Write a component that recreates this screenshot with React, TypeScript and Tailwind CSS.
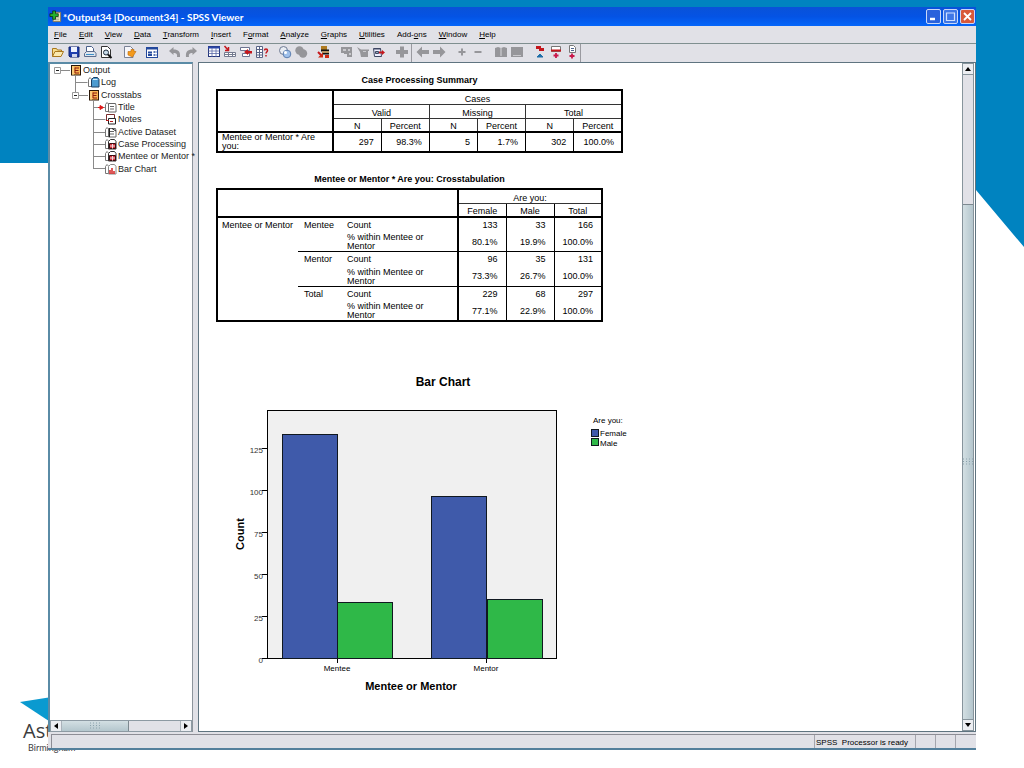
import { Fragment, type ReactNode } from "react";

const MENUS: [string, string, string][] = [
  ["", "F", "ile"],
  ["", "E", "dit"],
  ["", "V", "iew"],
  ["", "D", "ata"],
  ["", "T", "ransform"],
  ["", "I", "nsert"],
  ["F", "o", "rmat"],
  ["", "A", "nalyze"],
  ["", "G", "raphs"],
  ["", "U", "tilities"],
  ["Add-", "o", "ns"],
  ["", "W", "indow"],
  ["", "H", "elp"],
];

const GRAY = "#96969a";

const ICONS: Record<string, ReactNode> = {
  Open: (
    <>
      <path d="M2.5 12.500V4.500h4l1 1.500h4v2" fill="#f6dc8a" stroke="#a9771d" />
      <path d="M2.500 12.500l2.500-5h8.500l-2.500 5z" fill="#fbe9ae" stroke="#a9771d" />
    </>
  ),
  Save: (
    <>
      <path d="M3 3h10v10H4l-1-1z" fill="#1f3fae" stroke="#10226e" />
      <rect x="5" y="3" width="6" height="5" fill="#eef2ff" />
      <rect x="6" y="10" width="5" height="3" fill="#cfd6ee" />
    </>
  ),
  Print: (
    <>
      <path d="M4.500 8.500v-6h5l2 2v4" fill="#fff" stroke="#4a5f8a" />
      <path d="M2.500 12.500v-3l2-2h8l1.500 2v3z" fill="#dfe5ee" stroke="#5c6c8e" />
      <path d="M4 10.500h8" stroke="#3c8fc8" />
    </>
  ),
  "Print Preview": (
    <>
      <path d="M3.500 2.500h6l3 3v8h-9z" fill="#fff" stroke="#333" />
      <circle cx="8" cy="8.500" r="2.500" fill="#c9dbe9" stroke="#1f2f3f" />
      <path d="M10 10.500l3.500 3.500" stroke="#111" strokeWidth="2" />
    </>
  ),
  Export: (
    <>
      <path d="M3.500 2.500h6l2.500 2.500v8.500h-8.500z" fill="#f6f6fa" stroke="#7b8296" />
      <path d="M7 7.500h3v-2h3v2h2L11.500 13 7 11z" fill="#f39a1d" stroke="#c06a08" strokeWidth=".6" />
    </>
  ),
  "Recall Dialog": (
    <>
      <rect x="2.500" y="3.500" width="11" height="10" fill="#fff" stroke="#24499c" />
      <path d="M2 4.500h12" stroke="#24499c" strokeWidth="2" />
      <path d="M4 8.500h4M4 11h4" stroke="#24499c" strokeWidth="2" />
      <path d="M9.500 8h3M9.500 11h3" stroke="#24499c" strokeWidth="1.500" strokeDasharray="1.500 .5" />
    </>
  ),
  Undo: <path d="M2 7l4.500-4v2.500c5 0 7 2 6.500 7.500h-3c.5-3-.5-4-3.500-4V11z" fill={GRAY} />,
  Redo: <path d="M14 7l-4.500-4v2.500C4.500 5.500 2.500 7.500 3 13h3c-.5-3 .5-4 3.500-4V11z" fill={GRAY} />,
  "Go to Data": (
    <>
      <rect x="2.500" y="2.500" width="11" height="10" fill="#fff" stroke="#24357a" />
      <path d="M2 3.500h12" stroke="#2c47a8" strokeWidth="2" />
      <path d="M2.500 7h11M2.500 9.500h11M6 4v9M10 4v9" stroke="#5b6ba8" strokeWidth=".8" />
    </>
  ),
  "Go to Case": (
    <>
      <path d="M2.500 2l3.500 4M6.500 3v3.500H3" stroke="#c4161c" strokeWidth="1.500" fill="none" />
      <path d="M2.500 8.500h11v4h-11zM2.500 10.500h11M6.500 8.500v4M10.500 8.500v4" fill="#fff" stroke="#757b90" />
    </>
  ),
  "Go to Variable": (
    <>
      <path d="M2.500 3.500h9v3h-9zM4.500 9.500h7v3h-7z" fill="#fff" stroke="#6d7390" />
      <path d="M14 7H10V5L6 8l4 3V9.500h4z" fill="#c4161c" />
    </>
  ),
  Variables: (
    <>
      <path d="M2.500 2.500h6v11h-6zM2.500 5.500h6M2.500 8.500h6M2.500 11h6M5.500 2.500v11" fill="#fff" stroke="#596487" />
      <path d="M10.500 6.500c0-2 3-2 3 0 0 1.500-1.500 1.500-1.500 3M12 11v1.500" stroke="#c4161c" strokeWidth="1.500" fill="none" />
    </>
  ),
  "Use Sets": (
    <>
      <circle cx="6.500" cy="6.500" r="4" fill="#e9edf3" stroke="#6f7a92" />
      <circle cx="10" cy="10" r="3.800" fill="#9fc0ea" stroke="#5d7fb0" />
      <circle cx="8.500" cy="8.500" r="1.500" fill="#fff" />
    </>
  ),
  "Show All": (
    <>
      <circle cx="6.500" cy="6.500" r="4.200" fill={GRAY} />
      <circle cx="10" cy="9.500" r="4.200" fill={GRAY} />
    </>
  ),
  "Select Last Output": (
    <>
      <rect x="5" y="2" width="6" height="4" fill="#b07c22" />
      <path d="M5 6.500h8M6 9.500h7" stroke="#111" strokeWidth="2" />
      <path d="M6 8h7" stroke="#f3b04a" />
      <path d="M2 8l4 4" stroke="#c4161c" strokeWidth="2" />
      <path d="M2 13.500h5V8.500zM9 11h4v3H9z" fill="#d02a12" />
    </>
  ),
  "Associate Script": (
    <>
      <path d="M2 3h11v10H8v-3H5V9H2z" fill={GRAY} />
      <path d="M4 5h3v2H4zM9 5h2v2H9zM10 9h2v2h-2z" fill="#c9c9cd" />
    </>
  ),
  "Run Script": (
    <>
      <path d="M2 3l4 2.500h8v1.500h-1v6H6L5 8z" fill={GRAY} />
      <path d="M8 7h3v1H8z" fill="#c9c9cd" />
    </>
  ),
  "Designate Window": (
    <>
      <path d="M2.500 4.500h7l1 8h-7z" fill="#eef" stroke="#3e4762" />
      <path d="M3 5h7M4.500 7.500h3v2h-3z" stroke="#3e4762" fill="#9ab" />
      <path d="M8 7.500h3V6l3 2.500-3 2.500V9.500H8z" fill="#c4161c" />
    </>
  ),
  "Add Cross": <path d="M6 2.500h4V6h4v4h-4v3.500H6V10H2V6h4z" fill={GRAY} />,
  Back: <path d="M1.500 8L7 2.500V6h7v4H7v3.500z" fill={GRAY} />,
  Forward: <path d="M14.500 8L9 2.500V6H2v4h7v3.500z" fill={GRAY} />,
  Promote: <path d="M7 4.500h2V7h2.500v2H9v2.500H7V9H4.500V7H7z" fill={GRAY} />,
  Demote: <path d="M4.500 7h7v2h-7z" fill={GRAY} />,
  Expand: (
    <>
      <path d="M2 4l3-1 3 1 3-1 3 1v9H2z" fill={GRAY} />
      <path d="M8 4v8" stroke="#d8d8dc" />
    </>
  ),
  Collapse: (
    <>
      <path d="M2 3h12v10H2z" fill={GRAY} />
      <path d="M4 11.500h8" stroke="#c9c9cd" />
    </>
  ),
  "Insert Heading": (
    <>
      <path d="M4 2h5v2h3v3H7V5H4z" fill="#c4161c" />
      <path d="M5 13l3-3 3 3z" fill="#1f6fa8" stroke="#1f6fa8" />
    </>
  ),
  "Insert Title": (
    <>
      <path d="M3.500 2.500h9v5h-9z" fill="#fff" stroke="#777" />
      <path d="M3 6.500h10" stroke="#c4161c" strokeWidth="2" />
      <path d="M8 9v5M5.500 11.500h5" stroke="#c9184a" strokeWidth="1.800" />
    </>
  ),
  "Insert Text": (
    <>
      <path d="M5.500 1.500h4l2 2v5h-6z" fill="#fff" stroke="#777" />
      <path d="M7 4.500h3M7 6.500h3" stroke="#4f6690" />
      <path d="M8 9.500v5M5.500 12h5" stroke="#c9184a" strokeWidth="1.800" />
    </>
  ),
};

const GROUPS_A = [
  ["Open", "Save", "Print", "Print Preview"],
  ["Export"],
  ["Recall Dialog"],
  ["Undo", "Redo"],
  ["Go to Data", "Go to Case", "Go to Variable", "Variables"],
  ["Use Sets", "Show All"],
  ["Select Last Output"],
  ["Associate Script", "Run Script", "Designate Window"],
  ["Add Cross"],
];

const GROUPS_B = [
  ["Back", "Forward"],
  ["Promote", "Demote"],
  ["Expand", "Collapse"],
  ["Insert Heading", "Insert Title", "Insert Text"],
];

function ToolGroups({ groups }: { groups: string[][] }) {
  return (
    <div className="flex gap-[7px]">
      {groups.map((group) => (
        <div key={group[0]} className="flex">
          {group.map((name) => (
            <button key={name} type="button" aria-label={name} className="size-4">
              <svg viewBox="0 0 16 16" className="size-4">
                {ICONS[name]}
              </svg>
            </button>
          ))}
        </div>
      ))}
    </div>
  );
}

function Backdrop() {
  return (
    <div className="absolute inset-0 overflow-hidden">
      <svg viewBox="0 0 1024 768" preserveAspectRatio="none" className="size-full">
        <path d="M0 0h1024v247L976 190 953 163H0z" fill="#0083c0" />
        <path d="M20 702l38-6v31z" fill="#0a9ad0" />
      </svg>
      <div className="absolute bottom-[14px] left-[23px] text-[#3c3c3e]">
        <p className="font-['Open_Sans','Liberation_Sans',sans-serif] text-xl leading-[22px]">Aston</p>
        <p className="pl-[5px] font-['Lato','Liberation_Sans',sans-serif] text-[9px] leading-3">Birmingham</p>
      </div>
    </div>
  );
}

function TitleBar() {
  const button = "flex size-[15px] items-center justify-center rounded-[2px] border border-[#c9d8f8]";
  return (
    <header className="flex h-[19px] shrink-0 items-center bg-linear-to-b from-[#0a52d8] via-[#0453e4] to-[#0566fa] pr-px">
      <svg viewBox="0 0 14 14" className="ml-px size-[13px]">
        <path d="M4.500 2.500h8v10h-8z" fill="#f4e6c8" stroke="#8b7a50" />
        <path d="M6 8.500h5M6 10.500h5" stroke="#9a8" />
        <path d="M4 1h3v3h3v3H7v3H4V7H1V4h3z" fill="#25b32b" stroke="#062b08" strokeWidth=".8" />
      </svg>
      <h1 className="ml-px grow font-['Lato','Liberation_Sans',sans-serif] text-[10px] leading-4 font-bold text-white">
        *Output34 [Document34] - SPSS Viewer
      </h1>
      <div className="flex gap-[2px]">
        <button type="button" aria-label="Minimize" className={`${button} bg-[#2a62dc]`}>
          <svg viewBox="0 0 13 13" className="size-[13px]">
            <path d="M3 9h5" stroke="#fff" strokeWidth="2.500" />
          </svg>
        </button>
        <button type="button" aria-label="Maximize" className={`${button} bg-[#3f77e6]`}>
          <svg viewBox="0 0 13 13" className="size-[13px]">
            <path d="M2.500 3v7.500h8V3M2 3h9" fill="none" stroke="#cfe0ff" strokeWidth="1.200" />
          </svg>
        </button>
        <button type="button" aria-label="Close" className={`${button} bg-[#d8593a]`}>
          <svg viewBox="0 0 13 13" className="size-[13px]">
            <path d="M3 3l7 7M10 3l-7 7" stroke="#fff" strokeWidth="1.800" />
          </svg>
        </button>
      </div>
    </header>
  );
}

type NodeKind = "book" | "log" | "title" | "notes" | "data" | "table" | "chart";

const TREE: { label: string; depth: number; kind: NodeKind }[] = [
  { label: "Output", depth: 0, kind: "book" },
  { label: "Log", depth: 1, kind: "log" },
  { label: "Crosstabs", depth: 1, kind: "book" },
  { label: "Title", depth: 2, kind: "title" },
  { label: "Notes", depth: 2, kind: "notes" },
  { label: "Active Dataset", depth: 2, kind: "data" },
  { label: "Case Processing", depth: 2, kind: "table" },
  { label: "Mentee or Mentor *", depth: 2, kind: "table" },
  { label: "Bar Chart", depth: 2, kind: "chart" },
];

const INDENT = ["pl-5", "pl-[38px]", "pl-[55px]"];

function NodeIcon({ kind }: { kind: NodeKind }) {
  if (kind === "book") {
    return (
      <svg viewBox="0 0 12 12" className="size-3">
        <rect x="1.500" y="1.500" width="9" height="9.500" fill="#f9b552" stroke="#2a1606" />
        <path d="M3 2v9" stroke="#fde3a0" />
        <path d="M5 3.500v5.500M5 4h4M5 6.500h3.500M5 9h4" stroke="#8c1c10" fill="none" />
      </svg>
    );
  }
  if (kind === "notes") {
    return (
      <svg viewBox="0 0 12 12" className="size-3">
        <path d="M1.500 1.500h8v6h-8z" fill="#fff" stroke="#7b2c2c" />
        <path d="M3.500 5.500h7v5.500h-7z" fill="#fff" stroke="#222" />
        <path d="M1 7.500h3M5 8.500h3" stroke="#b01818" />
      </svg>
    );
  }
  return (
    <svg viewBox="0 0 12 12" className="size-3">
      <path d="M.5 10.500v-7l1.500-2 2 2M3 10.500H.5" fill="none" stroke="#777" />
      {kind === "log" && <path d="M3.500 3.500l2-2h4l1.500 2v7.500H3.500z" fill="#4c9bd0" stroke="#1d3f63" />}
      {kind === "log" && <path d="M5 3.500h4.500" stroke="#d6ebf8" />}
      {(kind === "title" || kind === "data") && (
        <path d="M3.500 2.500h7l.5 2v6.500H3.500zM5 5.500h4M5 8h4" fill="#fff" stroke="#666" />
      )}
      {kind === "data" && <path d="M4.500 2v9M7 2.500l4 2.500" stroke="#222" fill="none" />}
      {kind === "table" && (
        <>
          <path d="M3.500 3.500l2-2h4l1.500 2v7.500H3.500z" fill="#fff" stroke="#333" />
          <path d="M4.500 5.500h6v5h-6z" fill="#d0303a" stroke="#3a0d10" />
          <path d="M5 8h5M7.500 6v4.500" stroke="#f3d9dc" />
        </>
      )}
      {kind === "chart" && (
        <>
          <path d="M3.500 11V3.500l2-2h4l1.500 2V11z" fill="#fff" stroke="#888" />
          <path d="M5 11V7M7 11V5M9 11V8" stroke="#d42020" strokeWidth="1.500" />
        </>
      )}
    </svg>
  );
}

function OutlinePane() {
  return (
    <nav aria-label="Outline" className="flex w-[145px] shrink-0 flex-col border-t-2 border-r border-l-2 border-[#5a8ba6] border-r-[#8d949c] bg-white">
      <div className="relative h-[111px]">
        <svg viewBox="0 0 142 111" className="absolute top-0 left-0 h-[111px] w-[142px]">
          <path
            d="M10 6.500h10M25.500 12v18M25.500 18.500h12M29 31.500h9M43.500 37v68M43.500 43.500h12M43.500 55.500h12M43.500 68.500h12M43.500 80.500h12M43.500 92.500h12M43.500 104.500h12"
            stroke="#8a8a8a"
            fill="none"
          />
          <path d="M4.500 3.500h6v6h-6zM22.500 28.500h6v6h-6z" fill="#fff" stroke="#999" />
          <path d="M6 6.500h3M24 31.500h3" stroke="#222" />
          <path d="M48 43.500h3M50 41.500l3.500 2-3.500 2z" fill="#e01818" stroke="#e01818" />
        </svg>
        <ul className="relative grid h-full grid-rows-9 text-[9px] leading-3 text-[#1c1c1c]">
          {TREE.map((node) => (
            <li key={node.label} className={`flex items-center gap-px whitespace-nowrap ${INDENT[node.depth]}`}>
              <NodeIcon kind={node.kind} />
              {node.label}
            </li>
          ))}
        </ul>
      </div>
      <div className="mt-auto flex h-3 border border-[#8d9aa3] bg-[#e1e1e7]">
        <button type="button" aria-label="Scroll left" className="flex w-[11px] items-center justify-center border-r border-[#aab2ba] bg-[#eceef2]">
          <svg viewBox="0 0 6 6" className="size-[6px]"><path d="M5 0v6L1 3z" /></svg>
        </button>
        <div className="flex grow">
          <div className="flex w-[57%] items-center justify-center border-r border-[#7d8990] bg-linear-to-b from-[#d3dfe3] to-[#b4c6cd]">
            <Grip />
          </div>
        </div>
        <button type="button" aria-label="Scroll right" className="flex w-[11px] items-center justify-center border-l border-[#aab2ba] bg-[#eceef2]">
          <svg viewBox="0 0 6 6" className="size-[6px]"><path d="M1 0v6l4-3z" /></svg>
        </button>
      </div>
    </nav>
  );
}

function Grip() {
  return (
    <svg viewBox="0 0 10 8" className="h-2 w-[10px]">
      <path d="M0 1h10M0 3.500h10M0 6h10" stroke="#8ba2ac" strokeDasharray="1 2" />
    </svg>
  );
}

const CASES = ["297", "98.3%", "5", "1.7%", "302", "100.0%"];

function CaseSummary() {
  const head = "border border-[#333] p-0 align-bottom font-normal";
  return (
    <table className="w-[407px] table-fixed border-collapse border-2 border-black text-[9px] leading-[9px]">
      <caption className="pb-[3px] leading-3 font-bold">Case Processing Summary</caption>
      <colgroup>
        <col className="w-[116px]" />
        <col span={6} />
      </colgroup>
      <thead>
        <tr className="h-[14px]">
          <td rowSpan={3} className="border-r-2 border-b-2 border-black" />
          <th colSpan={6} className={head}>Cases</th>
        </tr>
        <tr className="h-[14px]">
          {["Valid", "Missing", "Total"].map((label) => (
            <th key={label} colSpan={2} className={head}>{label}</th>
          ))}
        </tr>
        <tr className="h-[14px]">
          {["N", "Percent", "N", "Percent", "N", "Percent"].map((label, i) => (
            <th key={i} className="border border-b-2 border-[#333] border-b-black p-0 align-bottom font-normal">{label}</th>
          ))}
        </tr>
      </thead>
      <tbody>
        <tr className="h-5">
          <th className="border-r-2 border-black p-0 pl-1 text-left font-normal">Mentee or Mentor * Are you:</th>
          {CASES.map((value) => (
            <td key={value} className="border-l border-black p-0 pr-[7px] text-right">{value}</td>
          ))}
        </tr>
      </tbody>
    </table>
  );
}

const CROSSTAB = [
  { label: "Mentee", count: ["133", "33", "166"], pct: ["80.1%", "19.9%", "100.0%"] },
  { label: "Mentor", count: ["96", "35", "131"], pct: ["73.3%", "26.7%", "100.0%"] },
  { label: "Total", count: ["229", "68", "297"], pct: ["77.1%", "22.9%", "100.0%"] },
];

const VALUE_BORDER = ["border-l-2", "border-l", "border-l"];

function Crosstab() {
  return (
    <table className="w-[387px] table-fixed border-collapse border-2 border-black text-[9px] leading-[9px]">
      <caption className="pb-[3px] leading-3 font-bold">Mentee or Mentor * Are you: Crosstabulation</caption>
      <colgroup>
        <col className="w-[81px]" />
        <col className="w-[42px]" />
        <col className="w-[118px]" />
        <col span={3} />
      </colgroup>
      <thead>
        <tr className="h-[14px]">
          <td colSpan={3} rowSpan={2} className="border-r-2 border-b-2 border-black" />
          <th colSpan={3} className="border-b border-[#333] p-0 align-bottom font-normal">Are you:</th>
        </tr>
        <tr className="h-[14px]">
          {["Female", "Male", "Total"].map((label, i) => (
            <th key={label} className={`border-b-2 border-black p-0 align-bottom font-normal ${VALUE_BORDER[i]}`}>{label}</th>
          ))}
        </tr>
      </thead>
      <tbody>
        {CROSSTAB.map((row, r) => (
          <Fragment key={row.label}>
            <tr className="h-4">
              {r === 0 && (
                <th rowSpan={6} className="p-0 pt-[3px] pl-1 text-left align-top font-normal whitespace-nowrap">Mentee or Mentor</th>
              )}
              <th rowSpan={2} className="border-t border-black p-0 pt-[3px] pl-[6px] text-left align-top font-normal">{row.label}</th>
              <th className="border-t border-black p-0 pl-[7px] text-left font-normal">Count</th>
              {row.count.map((value, i) => (
                <td key={i} className={`border-t border-black p-0 pr-2 text-right ${VALUE_BORDER[i]}`}>{value}</td>
              ))}
            </tr>
            <tr className="h-[18px]">
              <th className="p-0 pr-6 pl-[7px] text-left font-normal">% within Mentee or Mentor</th>
              {row.pct.map((value, i) => (
                <td key={i} className={`border-black p-0 pr-2 text-right ${VALUE_BORDER[i]}`}>{value}</td>
              ))}
            </tr>
          </Fragment>
        ))}
      </tbody>
    </table>
  );
}

const BARS = [
  { x: 65, count: 133, fill: "#3f5aaa" },
  { x: 120, count: 33, fill: "#2fb848" },
  { x: 214, count: 96, fill: "#3f5aaa" },
  { x: 270, count: 35, fill: "#2fb848" },
];

function BarChart() {
  const y = (count: number) => Math.round(288 - count * 1.684) + 0.5;
  return (
    <svg viewBox="0 0 420 330" className="h-[330px] w-[420px] font-['Liberation_Sans',Arial,sans-serif]" role="img" aria-label="Bar Chart">
      <text x="226" y="16" fontSize="12" fontWeight="700" textAnchor="middle">Bar Chart</text>
      <rect x="50.500" y="40.500" width="289" height="248" fill="#f0f0f0" stroke="#000" />
      {BARS.map((bar) => (
        <rect key={bar.x} x={bar.x + 0.5} y={y(bar.count)} width="55" height={288.5 - y(bar.count)} fill={bar.fill} stroke="#101820" />
      ))}
      {[0, 25, 50, 75, 100, 125].map((tick) => (
        <g key={tick}>
          <path d={`M45 ${y(tick)}h5`} stroke="#000" />
          <text x="46" y={y(tick) + 4} fontSize="8" textAnchor="end" fill="#333">{tick}</text>
        </g>
      ))}
      <path d="M50.500 40v249M120.500 289v4M269.500 289v4" stroke="#000" />
      <text x="120" y="301" fontSize="8" textAnchor="middle">Mentee</text>
      <text x="269" y="301" fontSize="8" textAnchor="middle">Mentor</text>
      <text x="194" y="320" fontSize="11" fontWeight="700" textAnchor="middle">Mentee or Mentor</text>
      <text transform="translate(27 164) rotate(-90)" fontSize="11" fontWeight="700" textAnchor="middle">Count</text>
      <text x="376" y="53" fontSize="8">Are you:</text>
      <rect x="374.500" y="59.500" width="7" height="7" fill="#3f5aaa" stroke="#101820" />
      <rect x="374.500" y="68.500" width="7" height="7" fill="#2fb848" stroke="#101820" />
      <text x="383" y="66" fontSize="8">Female</text>
      <text x="383" y="76" fontSize="8">Male</text>
    </svg>
  );
}

function VerticalScrollbar() {
  return (
    <div className="mr-px flex w-3 shrink-0 flex-col border border-[#87949c] bg-[#e1e1e7]">
      <button type="button" aria-label="Scroll up" className="flex h-[11px] items-center justify-center border-b border-[#87949c] bg-[#eceef2]">
        <svg viewBox="0 0 6 6" className="size-[6px]"><path d="M0 5h6L3 1z" /></svg>
      </button>
      <div className="flex grow flex-col">
        <div className="grow-1 basis-0" />
        <div className="flex grow-4 basis-0 items-center justify-center border-t border-[#7d8990] bg-linear-to-r from-[#d3dfe3] to-[#b4c6cd]">
          <Grip />
        </div>
      </div>
      <button type="button" aria-label="Scroll down" className="flex h-[11px] items-center justify-center border-t border-[#87949c] bg-[#eceef2]">
        <svg viewBox="0 0 6 6" className="size-[6px]"><path d="M0 1h6L3 5z" /></svg>
      </button>
    </div>
  );
}

export default function App() {
  return (
    <div className="relative flex h-screen flex-col bg-white px-12 pt-[7px] pb-[18px] font-['Liberation_Sans',Arial,sans-serif] text-black">
      <Backdrop />
      <div className="relative flex min-h-0 grow flex-col border-b-2 border-[#54809c] bg-[#e1e1e7]">
        <TitleBar />
        <nav aria-label="Main menu" className="flex h-[18px] shrink-0 items-center gap-3 border-b border-[#7f8f90] pl-[6px] text-[8px] leading-3">
          {MENUS.map(([before, key, after]) => (
            <button key={before + key + after} type="button">
              {before}
              <span className="underline">{key}</span>
              {after}
            </button>
          ))}
        </nav>
        <div role="toolbar" aria-label="Tools" className="flex h-[18px] shrink-0 items-start pl-[2px]">
          <ToolGroups groups={GROUPS_A} />
          <div className="mr-[3px] ml-px h-[18px] w-px bg-[#9a9aa0]" />
          <ToolGroups groups={GROUPS_B} />
          <div className="h-[18px] w-px bg-[#9a9aa0]" />
        </div>
        <div className="flex min-h-0 grow">
          <OutlinePane />
          <main className="ml-[5px] flex min-w-0 grow border border-[#5f7480] bg-white">
            <div className="min-w-0 grow overflow-hidden pt-[11px] pl-[17px]">
              <CaseSummary />
              <div className="mt-5">
                <Crosstab />
              </div>
              <div className="mt-12 ml-px">
                <BarChart />
              </div>
            </div>
            <VerticalScrollbar />
          </main>
        </div>
        <footer className="mt-[2px] ml-[3px] flex h-[14px] shrink-0 border-t border-l border-[#8d8d95] pr-px text-[8px] leading-4">
          <div className="grow" />
          <div className="w-[101px] border-l border-[#a5a5ad] pl-px">SPSS&nbsp; Processor is ready</div>
          <div className="w-5 border-l border-[#a5a5ad]" />
          <div className="w-5 border-l border-[#a5a5ad]" />
          <div className="w-5 border-l border-[#a5a5ad]" />
        </footer>
      </div>
    </div>
  );
}
